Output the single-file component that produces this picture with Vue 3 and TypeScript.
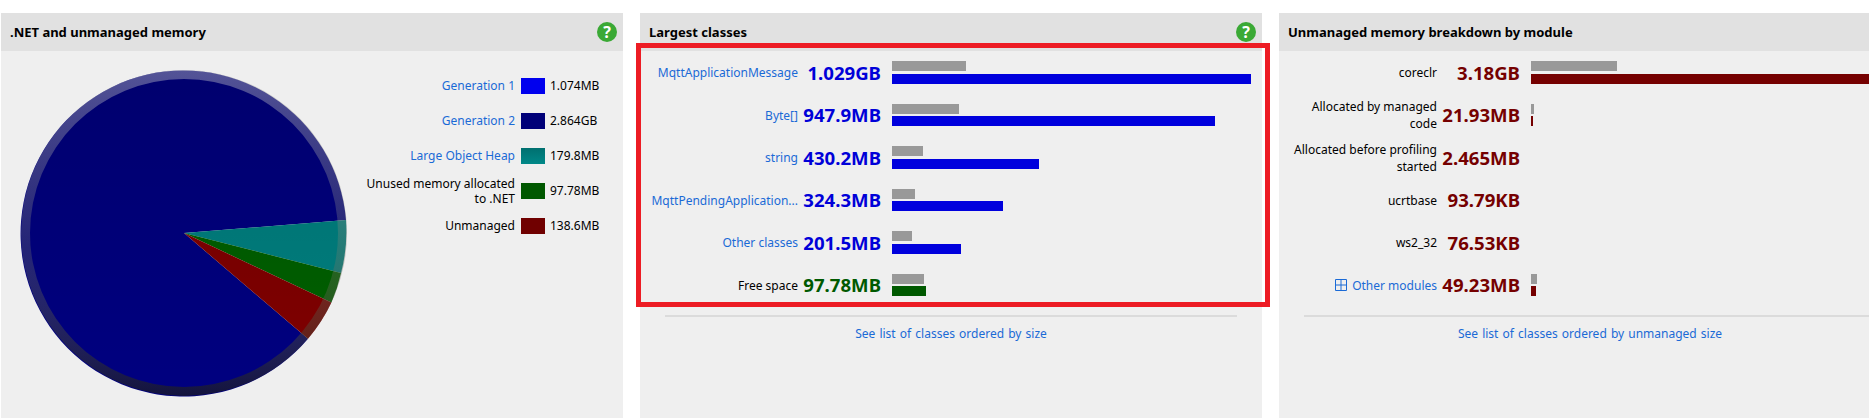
<script setup lang="ts">
interface Row {
  label: string
  value: string
  gray: number
  bar: number
  link?: boolean
  expand?: boolean
}
const legend = [
  { label: 'Generation 1', value: '1.074MB', link: true, cls: 'sw-blue' },
  { label: 'Generation 2', value: '2.864GB', link: true, cls: 'sw-navy' },
  { label: 'Large Object Heap', value: '179.8MB', link: true, cls: 'sw-teal' },
  { label: 'Unused memory allocated to .NET', value: '97.78MB', link: false, cls: 'sw-green' },
  { label: 'Unmanaged', value: '138.6MB', link: false, cls: 'sw-red' },
]
const classes: (Row & { tone: string })[] = [
  { label: 'MqttApplicationMessage', value: '1.029GB', gray: 74, bar: 359, link: true, tone: 'blue' },
  { label: 'Byte[]', value: '947.9MB', gray: 67, bar: 323, link: true, tone: 'blue' },
  { label: 'string', value: '430.2MB', gray: 31, bar: 147, link: true, tone: 'blue' },
  { label: 'MqttPendingApplication...', value: '324.3MB', gray: 23, bar: 111, link: true, tone: 'blue' },
  { label: 'Other classes', value: '201.5MB', gray: 20, bar: 69, link: true, tone: 'blue' },
  { label: 'Free space', value: '97.78MB', gray: 32, bar: 34, tone: 'green' },
]
const modules: (Row & { tone: string })[] = [
  { label: 'coreclr', value: '3.18GB', gray: 86, bar: 359, tone: 'red' },
  { label: 'Allocated by managed code', value: '21.93MB', gray: 3, bar: 2, tone: 'red' },
  { label: 'Allocated before profiling started', value: '2.465MB', gray: 0, bar: 0, tone: 'red' },
  { label: 'ucrtbase', value: '93.79KB', gray: 0, bar: 0, tone: 'red' },
  { label: 'ws2_32', value: '76.53KB', gray: 0, bar: 0, tone: 'red' },
  { label: 'Other modules', value: '49.23MB', gray: 6, bar: 5, link: true, expand: true, tone: 'red' },
]
const tracks = [
  { title: 'Largest classes', help: true, rows: classes, more: 'See list of classes ordered by size' },
  { title: 'Unmanaged memory breakdown by module', help: false, rows: modules, more: 'See list of classes ordered by unmanaged size' },
]
const cx = 165
const cy = 165
const r = 163
const slices = [
  { fill: '#000080', d: `M${cx} ${cy}L289 270.8A${r} ${r} 0 1 1 327 152Z` },
  { fill: '#008080', d: `M${cx} ${cy}L327 152A${r} ${r} 0 0 1 322 205Z` },
  { fill: '#006000', d: `M${cx} ${cy}L322 205A${r} ${r} 0 0 1 312.4 234.6Z` },
  { fill: '#800000', d: `M${cx} ${cy}L312.4 234.6A${r} ${r} 0 0 1 289 270.8Z` },
]
const ring = `M2 165A163 163 0 1 1 328 165A163 163 0 1 1 2 165ZM11 165A154 154 0 1 0 319 165A154 154 0 1 0 11 165Z`
</script>

<template>
  <div class="page">
    <section class="panel">
      <header class="head">
        <h2>.NET and unmanaged memory</h2>
        <span class="help">?</span>
      </header>
      <div class="overview">
        <svg class="pie" width="330" height="330" viewBox="0 0 330 330">
          <defs>
            <linearGradient id="shade" x1="0" y1="0" x2="0" y2="1">
              <stop offset="0" stop-color="#000" stop-opacity="0.14" />
              <stop offset="1" stop-color="#000" stop-opacity="0" />
            </linearGradient>
            <linearGradient id="rim" x1="0" y1="0" x2="0" y2="1">
              <stop offset="0" stop-color="#e8e8e0" stop-opacity="0.36" />
              <stop offset="0.55" stop-color="#808070" stop-opacity="0.28" />
              <stop offset="1" stop-color="#202010" stop-opacity="0.6" />
            </linearGradient>
          </defs>
          <path v-for="s in slices" :key="s.fill" :d="s.d" :fill="s.fill" />
          <circle :cx="cx" :cy="cy" :r="r" fill="url(#shade)" />
          <path :d="ring" fill="url(#rim)" fill-rule="evenodd" />
        </svg>
        <ul class="legend">
          <li v-for="item in legend" :key="item.label" class="legend-row">
            <span class="legend-label" :class="{ link: item.link }">{{ item.label }}</span>
            <span class="swatch" :class="item.cls"></span>
            <span class="legend-value">{{ item.value }}</span>
          </li>
        </ul>
      </div>
    </section>

    <section v-for="t in tracks" :key="t.title" class="panel">
      <header class="head">
        <h2>{{ t.title }}</h2>
        <span v-if="t.help" class="help">?</span>
      </header>
      <div class="rows">
        <div v-for="row in t.rows" :key="row.label" class="row">
          <div class="row-label" :class="{ link: row.link }">
            <svg v-if="row.expand" class="plus" width="12" height="12" viewBox="0 0 12 12">
              <path d="M.5.5h11v11H.5zM6 .5v11M.5 6h11" fill="none" stroke="currentColor" />
            </svg>
            <span>{{ row.label }}</span>
          </div>
          <div class="row-value" :class="'tone-' + row.tone">{{ row.value }}</div>
          <div v-if="row.gray" class="bars">
            <div class="bar bar-gray" :style="{ width: row.gray + 'px' }"></div>
            <div class="bar" :class="'bg-' + row.tone" :style="{ width: row.bar + 'px' }"></div>
          </div>
        </div>
      </div>
      <div class="more"><span class="link">{{ t.more }}</span></div>
    </section>

    <div class="callout"></div>
  </div>
</template>

<style>
html,
body {
  margin: 0;
  overflow: hidden;
  background: #fff;
}
</style>

<style scoped>
.page {
  position: relative;
  display: flex;
  gap: 17px;
  width: 1869px;
  height: 418px;
  box-sizing: border-box;
  padding: 13px 0 0 1px;
  overflow: hidden;
  font-family: "Noto Sans", sans-serif;
  font-size: 12px;
  color: #000;
}
.panel {
  flex: none;
  width: 622px;
  background: #efefef;
}
.head {
  display: flex;
  align-items: center;
  justify-content: space-between;
  height: 38px;
  padding: 0 6px 0 9px;
  background: #e1e1e1;
}
.head h2 {
  margin: 0;
  font-size: 13px;
  font-weight: 700;
  color: #000;
}
.help {
  display: flex;
  align-items: center;
  justify-content: center;
  width: 20px;
  height: 20px;
  border-radius: 50%;
  background: #3aa935;
  color: #fff;
  font-size: 16px;
  font-weight: 700;
  line-height: 1;
}
.link {
  color: #1a6ad6;
}
.overview {
  display: flex;
  padding-top: 17px;
}
.pie {
  flex: none;
  margin-left: 18px;
}
.legend {
  flex: none;
  margin: 0 0 0 11px;
  padding: 0;
  list-style: none;
}
.legend-row {
  display: grid;
  grid-template-columns: 155px 24px auto;
  align-items: center;
  column-gap: 6px;
  height: 35px;
}
.legend-value {
  margin-left: -1px;
}
.legend-label {
  text-align: right;
  line-height: 15px;
}
.swatch {
  height: 16px;
}
.sw-blue { background: #0000ee; }
.sw-navy { background: #000078; }
.sw-teal { background: linear-gradient(#007070, #008888); }
.sw-green { background: #005800; }
.sw-red { background: #700000; }
.row {
  display: grid;
  grid-template-columns: 143px 83px 1fr;
  align-items: center;
  height: 42.5px;
  padding-left: 15px;
}
.row-label {
  display: flex;
  align-items: center;
  justify-content: flex-end;
  gap: 5px;
  padding-top: 1px;
  line-height: 17px;
  text-align: right;
}
.plus {
  flex: none;
}
.row-value {
  font-size: 18.6px;
  font-weight: 700;
  text-align: right;
  white-space: nowrap;
}
.tone-blue { color: #0000d8; }
.tone-green { color: #005900; }
.tone-red { color: #750000; }
.bars {
  display: flex;
  flex-direction: column;
  gap: 2.5px;
  margin-left: 11px;
}
.bar {
  height: 10px;
}
.bar-gray { background: #999; }
.bg-blue { background: #0000dd; }
.bg-green { background: #005900; }
.bg-red { background: #750000; }
.more {
  margin: 9px 25px 0;
  padding-top: 8px;
  border-top: 2px solid #dbdbdb;
  line-height: 17px;
  text-align: center;
  word-spacing: 1px;
}
.callout {
  position: absolute;
  left: 636px;
  top: 43px;
  width: 634px;
  height: 264px;
  box-sizing: border-box;
  border: 5px solid #ed1c24;
  pointer-events: none;
}
</style>
